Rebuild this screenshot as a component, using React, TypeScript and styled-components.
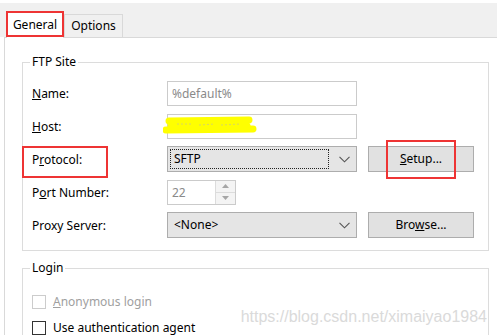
import React from "react";
import styled, { createGlobalStyle } from "styled-components";

const GlobalStyle = createGlobalStyle`
  html, body { margin: 0; padding: 0; background: #fff; }
  body {
    font-family: "Noto Sans", "Open Sans", sans-serif;
    font-size: 12px;
    color: #000;
  }
  #root { width: 497px; height: 335px; overflow: hidden; }
`;

const Window = styled.div`
  position: relative;
  width: 497px;
  height: 335px;
  overflow: hidden;
  background: #fff;
  display: flex;
  flex-direction: column;
`;

const TabStrip = styled.div`
  margin-top: 3px;
  height: 34px;
  flex: none;
  box-sizing: border-box;
  background: #f0f0f0;
  display: flex;
  align-items: flex-end;
  padding-left: 6px;
  position: relative;
  z-index: 1;
`;

const Tab = styled.div<{ $active?: boolean }>`
  position: relative;
  box-sizing: border-box;
  width: ${(p) => (p.$active ? 58 : 59)}px;
  height: ${(p) => (p.$active ? 26 : 23)}px;
  margin-bottom: ${(p) => (p.$active ? -1 : 0)}px;
  border: 1px solid #d9d9d9;
  border-bottom: none;
  background: ${(p) => (p.$active ? "#fff" : "#f0f0f0")};
  display: flex;
  align-items: center;
  justify-content: center;
  line-height: 16px;
  padding-bottom: ${(p) => (p.$active ? 2 : 0)}px;
`;

const RedMark = styled.div<{ $t: number; $r: number; $b: number; $l: number }>`
  position: absolute;
  top: ${(p) => p.$t}px;
  right: ${(p) => p.$r}px;
  bottom: ${(p) => p.$b}px;
  left: ${(p) => p.$l}px;
  border: 2px solid #ee3434;
  pointer-events: none;
`;

const TabPage = styled.div`
  margin-left: 4px;
  flex: 1;
  border-top: 1px solid #d9d9d9;
  border-left: 1px solid #d9d9d9;
  padding: 16px 8px 0 17px;
  display: flex;
  flex-direction: column;
  gap: 9px;
`;

const Group = styled.fieldset<{ $pt: number; $pb: number }>`
  margin: 0;
  min-width: 0;
  border: 1px solid #dcdcdc;
  padding: ${(p) => p.$pt}px 13px ${(p) => p.$pb}px 9px;
`;

const Legend = styled.legend`
  padding: 0 2px;
  margin-left: -2px;
  line-height: 16px;
`;

const FieldGrid = styled.div`
  display: grid;
  grid-template-columns: 124px 190px 106px;
  grid-auto-rows: 26px;
  column-gap: 11px;
  row-gap: 7px;
  align-items: center;
`;

const Label = styled.div`
  position: relative;
  line-height: 16px;
  white-space: nowrap;
  margin-top: 2px;
`;

const TextBox = styled.div<{ $muted?: boolean }>`
  position: relative;
  box-sizing: border-box;
  height: 25px;
  border: 1px solid #cbcbcb;
  background: #fff;
  color: ${(p) => (p.$muted ? "#8a8a8a" : "#000")};
  padding-left: 4px;
  display: flex;
  align-items: center;
`;

const Combo = styled.div`
  box-sizing: border-box;
  height: 26px;
  border: 1px solid #adadad;
  background: #e5e5e5;
  display: flex;
  align-items: center;
  padding: 0 6px 0 2px;
`;

const ComboText = styled.div<{ $focus?: boolean }>`
  flex: 1;
  box-sizing: border-box;
  height: 20px;
  line-height: 18px;
  padding-left: 3px;
  border: 1px ${(p) => (p.$focus ? "dotted #222" : "solid transparent")};
`;

const Chevron = styled.svg`
  flex: none;
  margin-left: 10px;
`;

const Button = styled.div`
  box-sizing: border-box;
  height: 26px;
  border: 1px solid #adadad;
  background: #e1e1e1;
  display: flex;
  align-items: center;
  justify-content: center;
  line-height: 16px;
`;

const ButtonWrap = styled.div`
  position: relative;
`;

const Spin = styled.div`
  box-sizing: border-box;
  width: 69px;
  height: 25px;
  border: 1px solid #cbcbcb;
  background: #fff;
  display: flex;
`;

const SpinText = styled.div`
  flex: 1;
  color: #8a8a8a;
  padding-left: 4px;
  display: flex;
  align-items: center;
`;

const SpinButtons = styled.div`
  width: 19px;
  display: flex;
  flex-direction: column;
  border-left: 1px solid #dcdcdc;
  background: #f4f4f4;
`;

const SpinHalf = styled.div<{ $top?: boolean }>`
  flex: 1;
  display: flex;
  align-items: center;
  justify-content: center;
  border-top: ${(p) => (p.$top ? "none" : "1px solid #dcdcdc")};
`;

const Scribble = styled.svg`
  position: absolute;
  left: -5px;
  top: 0px;
  pointer-events: none;
`;

const CheckRows = styled.div`
  display: flex;
  flex-direction: column;
  gap: 9px;
`;

const CheckRow = styled.div<{ $disabled?: boolean }>`
  display: flex;
  align-items: center;
  gap: 7px;
  height: 17px;
  color: ${(p) => (p.$disabled ? "#a0a0a0" : "#000")};
  line-height: 16px;
`;

const Box = styled.div<{ $disabled?: boolean }>`
  box-sizing: border-box;
  width: 14px;
  height: 14px;
  border: 1px solid ${(p) => (p.$disabled ? "#cccccc" : "#333")};
  background: #fff;
`;

const Watermark = styled.div`
  position: absolute;
  right: 10px;
  top: 307px;
  font-family: "Liberation Sans", Arial, sans-serif;
  font-size: 16px;
  line-height: 20px;
  color: #dadada;
  white-space: nowrap;
  pointer-events: none;
`;

const ChevronIcon = () => (
  <Chevron width="11" height="7" viewBox="0 0 11 7">
    <path d="M0.5 0.8 L5.5 5.8 L10.5 0.8" fill="none" stroke="#555" strokeWidth="1.1" />
  </Chevron>
);

const Triangle = ({ up }: { up?: boolean }) => (
  <svg width="7" height="4" viewBox="0 0 7 4">
    <path d={up ? "M0 4 L3.5 0 L7 4 Z" : "M0 0 L3.5 4 L7 0 Z"} fill="#a6a6a6" />
  </svg>
);

export default function App() {
  return (
    <Window>
      <GlobalStyle />
      <TabStrip>
        <Tab $active>
          General
          <RedMark $t={-2} $r={-1} $b={1} $l={-1} />
        </Tab>
        <Tab>Options</Tab>
      </TabStrip>
      <TabPage>
        <Group $pt={10} $pb={12}>
          <Legend>FTP Site</Legend>
          <FieldGrid>
            <Label>
              <u>N</u>ame:
            </Label>
            <TextBox $muted>%default%</TextBox>
            <div />

            <Label>
              <u>H</u>ost:
            </Label>
            <TextBox>
              <Scribble width="96" height="24" viewBox="0 0 96 24">
                <path
                  d="M6 6 L86 5 M3 15 L90 14 M8 10 L84 11"
                  fill="none"
                  stroke="#ffff00"
                  strokeWidth="7"
                  strokeLinecap="round"
                />
                <path
                  d="M14 9 L30 9 M36 10 L52 9 M58 10 L78 9"
                  fill="none"
                  stroke="#d8d860"
                  strokeWidth="1"
                  strokeDasharray="2 2"
                />
              </Scribble>
            </TextBox>
            <div />

            <Label>
              P<u>r</u>otocol:
              <RedMark $t={-6} $r={48} $b={-10} $l={-10} />
            </Label>
            <Combo>
              <ComboText $focus>SFTP</ComboText>
              <ChevronIcon />
            </Combo>
            <ButtonWrap>
              <Button>
                <span>
                  <u>S</u>etup...
                </span>
              </Button>
              <RedMark $t={-6} $r={18} $b={-7} $l={18} />
            </ButtonWrap>

            <Label>
              P<u>o</u>rt Number:
            </Label>
            <Spin>
              <SpinText>22</SpinText>
              <SpinButtons>
                <SpinHalf $top>
                  <Triangle up />
                </SpinHalf>
                <SpinHalf>
                  <Triangle />
                </SpinHalf>
              </SpinButtons>
            </Spin>
            <div />

            <Label>Proxy Server:</Label>
            <Combo>
              <ComboText>&lt;None&gt;</ComboText>
              <ChevronIcon />
            </Combo>
            <Button>
              <span>
                Bro<u>w</u>se...
              </span>
            </Button>
          </FieldGrid>
        </Group>
        <Group $pt={17} $pb={12}>
          <Legend>Login</Legend>
          <CheckRows>
            <CheckRow $disabled>
              <Box $disabled />
              <span>
                <u>A</u>nonymous login
              </span>
            </CheckRow>
            <CheckRow>
              <Box />
              <span>Use authentication agent</span>
            </CheckRow>
          </CheckRows>
        </Group>
      </TabPage>
      <Watermark>https://blog.csdn.net/ximaiyao1984</Watermark>
    </Window>
  );
}
